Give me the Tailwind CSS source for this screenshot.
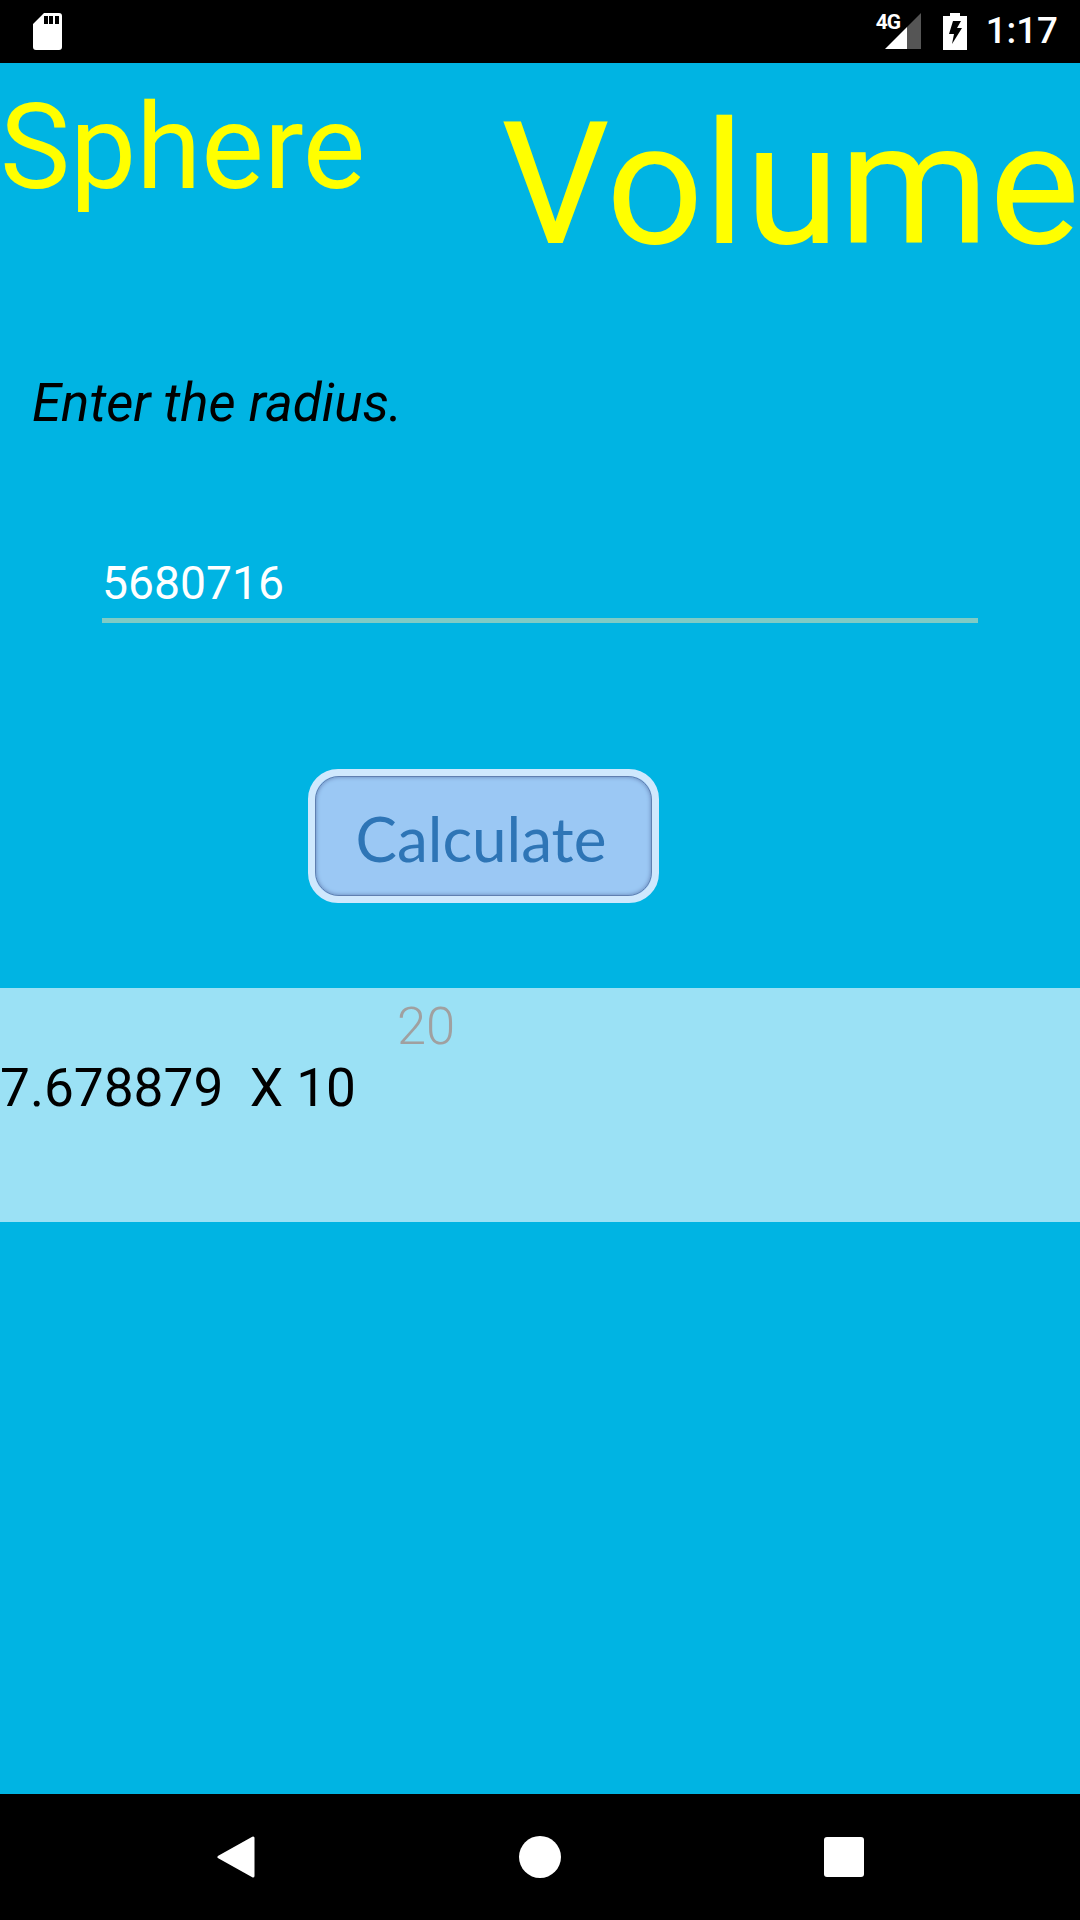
<!DOCTYPE html>
<html lang="en">
<head>
  <meta charset="UTF-8">
  <title>Sphere Volume</title>
  <script src="https://cdn.jsdelivr.net/npm/@tailwindcss/browser@4"></script>
</head>
<body class="bg-black font-['Roboto',sans-serif]">
  <div class="w-[1080px] h-[1920px] flex flex-col overflow-hidden">
    <!-- Status bar -->
    <div class="h-[63px] bg-black flex items-center justify-between pl-[33px] pr-[22px] text-white">
      <svg class="w-[29px] h-[37px]" viewBox="0 0 29 37">
        <path fill="#fff" fill-rule="evenodd" d="M11 0H26a3 3 0 0 1 3 3V34a3 3 0 0 1-3 3H3a3 3 0 0 1-3-3V11ZM11 3V11H15V3ZM16 3V11H20V3ZM22 3V11H26V3Z"/>
      </svg>
      <div class="flex items-center">
        <div class="relative w-[45px] h-[38px]">
          <span class="absolute left-0 top-[-1px] text-[21px] leading-[21px] font-bold tracking-[-1px]">4G</span>
          <svg class="absolute left-0 top-0 w-[45px] h-[38px]" viewBox="0 0 45 38">
            <path fill="#555" d="M31 36H45V0L31 14Z"/>
            <path fill="#fff" d="M9 36H31V14Z"/>
          </svg>
        </div>
        <svg class="ml-[22px] w-[24px] h-[37px]" viewBox="0 0 24 37">
          <path fill="#fff" fill-rule="evenodd" d="M7 0H17V3H24V37H0V3H7ZM10 8 6 21H11L9 31 19 15H14L18 8Z"/>
        </svg>
        <span class="ml-[19px] text-[36.75px] leading-none font-medium">1:17</span>
      </div>
    </div>

    <!-- App -->
    <main class="flex-1 bg-[#00b4e3] flex flex-col">
      <div class="flex justify-between items-start h-[202px]">
        <h1 class="mt-[16px] text-[118px] leading-[138px] text-[#ffff00]">Sphere</h1>
        <h2 class="mt-[23px] text-[171px] leading-[197px] text-[#ffff00] whitespace-nowrap">Volume</h2>
      </div>

      <p class="mt-[107px] ml-[32px] text-[52.8px] leading-[62px] italic text-black">Enter the radius.</p>

      <div class="mt-[122px] ml-[102px] w-[876px] border-b-[5px] border-[#7fcbc5] pb-[7px] text-[46.3px] leading-[55px] text-white">5680716</div>

      <div class="mt-[146px] ml-[308px] w-[351px] h-[134px] rounded-[30px] border-[7px] border-[#cfe8fd] bg-[#9bc8f4] shadow-[inset_0_0_2px_#9bc8f4]">
        <div class="h-full rounded-[24px] border border-[#5f7fb0] shadow-[inset_0_0_4px_#6583b5] flex items-center justify-center pt-[4px] pr-[5px] font-['Lato',sans-serif] text-[62px] text-[#2e75b6]">Calculate</div>
      </div>

      <section class="mt-[85px] h-[234px] bg-[#9be1f5]">
        <div class="pt-[7px] pl-[397px] text-[52.5px] leading-[62px] font-light text-[#a0a0a0]">20</div>
        <div class="text-[53.2px] leading-[62px] text-black whitespace-pre">7.678879  X 10</div>
      </section>
    </main>

    <!-- Nav bar -->
    <div class="h-[126px] bg-black flex items-center pl-[217px] pr-[216px] justify-between">
      <svg class="w-[38px] h-[42px]" viewBox="0 0 38 42">
        <path fill="#fff" stroke="#fff" stroke-width="3" stroke-linejoin="round" d="M36 2V40L2 21Z"/>
      </svg>
      <div class="w-[42px] h-[42px] rounded-full bg-white"></div>
      <div class="w-[40px] h-[40px] rounded-[3px] bg-white"></div>
    </div>
  </div>
</body>
</html>
